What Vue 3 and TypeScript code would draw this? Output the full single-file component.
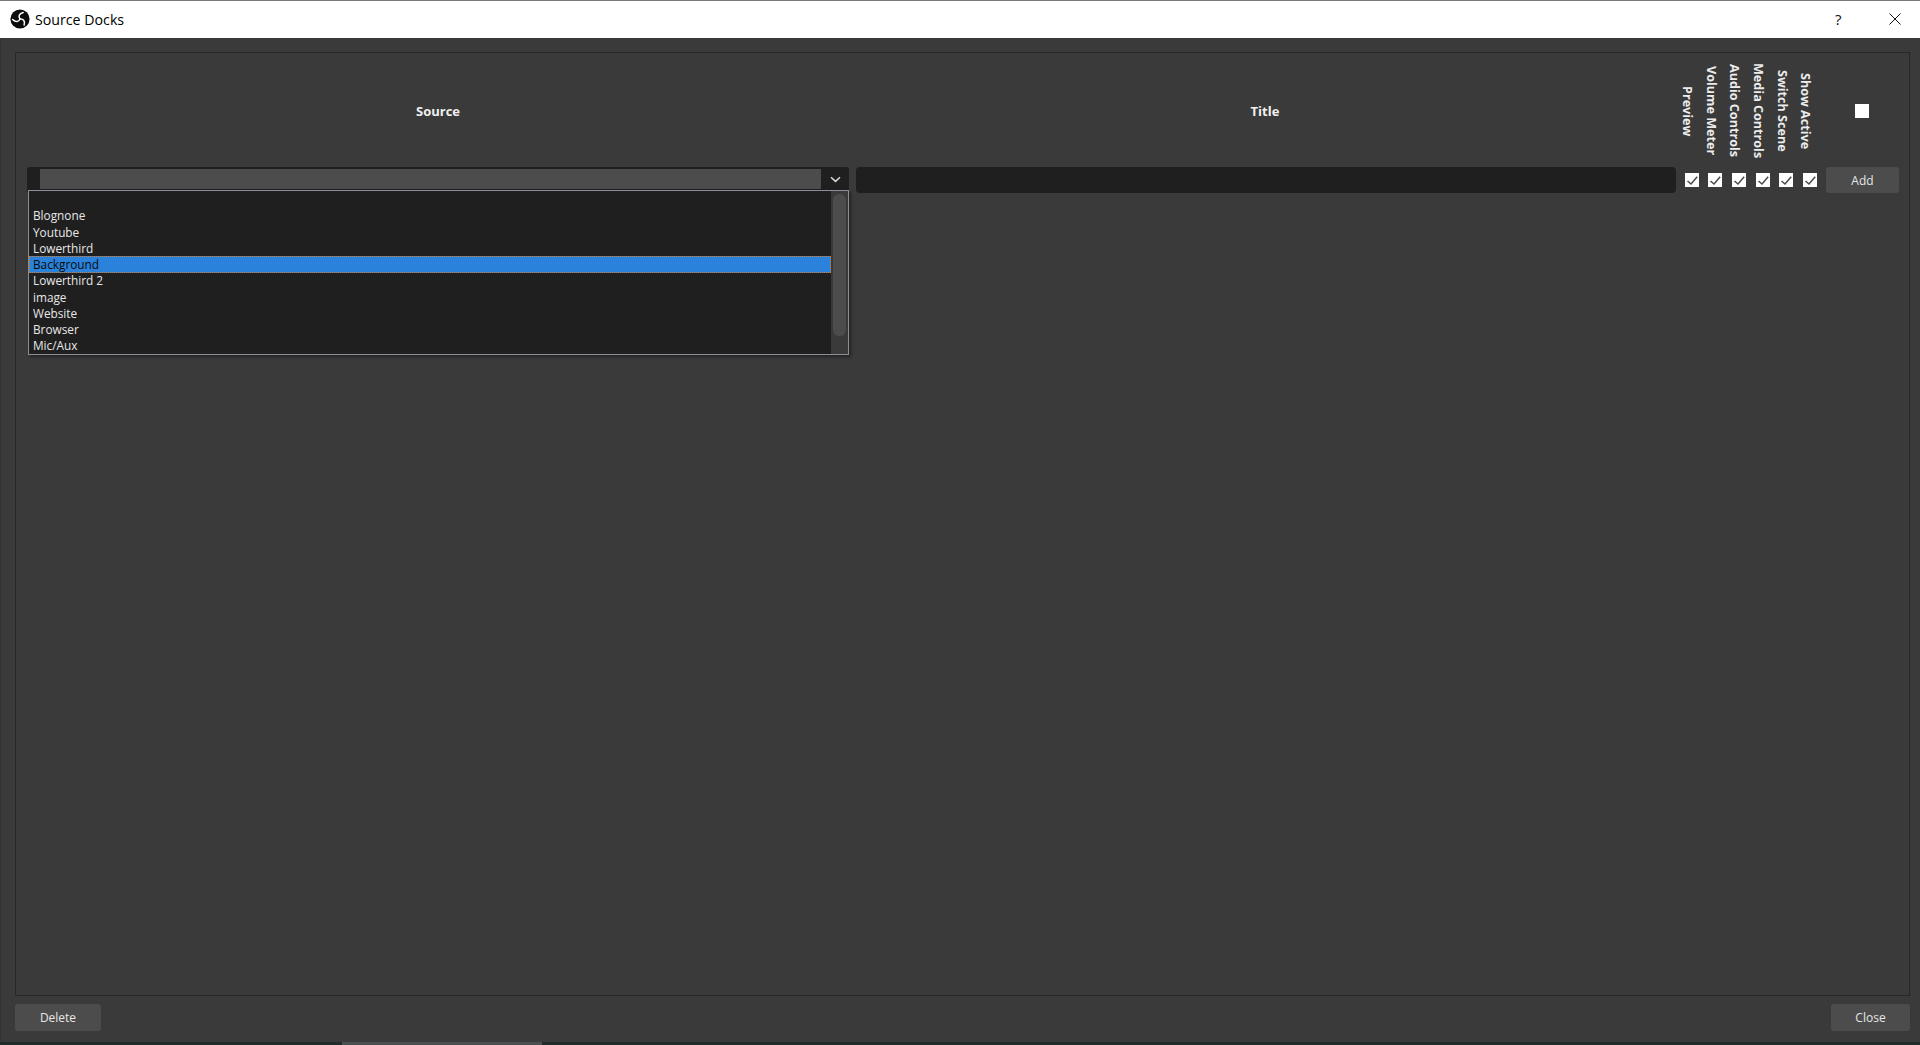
<script setup lang="ts">
const sources: string[] = ['', 'Blognone', 'Youtube', 'Lowerthird', 'Background', 'Lowerthird 2', 'image', 'Website', 'Browser', 'Mic/Aux']
const selected = 'Background'
const columns: string[] = ['Preview', 'Volume Meter', 'Audio Controls', 'Media Controls', 'Switch Scene', 'Show Active']
</script>

<template>
  <div class="window">
    <header class="titlebar">
      <svg class="logo" viewBox="0 0 20 20" aria-hidden="true">
        <circle cx="10" cy="10" r="9.6" fill="#0c0c0c" />
        <g fill="none" stroke="#fff" stroke-width="1.5" stroke-linecap="round">
          <path d="M10 10C8.2 7.6 8.8 4.4 13.2 3.4" />
          <path d="M10 10C8.2 7.6 8.8 4.4 13.2 3.4" transform="rotate(120 10 10)" />
          <path d="M10 10C8.2 7.6 8.8 4.4 13.2 3.4" transform="rotate(240 10 10)" />
        </g>
      </svg>
      <span class="title">Source Docks</span>
      <span class="help">?</span>
      <svg class="close-x" viewBox="0 0 12 12" aria-hidden="true">
        <path d="M.5.5l11 11M11.5.5l-11 11" stroke="#111" stroke-width="1" fill="none" />
      </svg>
    </header>

    <main class="content">
      <section class="panel">
        <div class="grid">
          <div class="head-cell">Source</div>
          <div class="head-cell title-head">Title</div>
          <div v-for="c in columns" :key="c" class="head-rot"><span>{{ c }}</span></div>
          <div class="head-all"><span class="check plain"></span></div>

          <div class="combo">
            <span class="combo-stub"></span>
            <span class="combo-value"></span>
            <span class="combo-arrow">
              <svg viewBox="0 0 11 7" aria-hidden="true">
                <path d="M1 1.2l4.5 4.2L10 1.2" stroke="#d8d8d8" stroke-width="1.5" fill="none" />
              </svg>
            </span>
            <div class="popup">
              <ul class="list">
                <li v-for="s in sources" :key="s" :class="{ sel: s === selected }">{{ s }}</li>
              </ul>
              <div class="track"><div class="thumb"></div></div>
            </div>
          </div>
          <div class="input"></div>
          <div v-for="c in columns" :key="c + '-box'" class="check-cell">
            <span class="check">
              <svg viewBox="0 0 14 14" aria-hidden="true">
                <path d="M2.5 8L6 11l6.2-7.2" stroke="#4a4a4a" stroke-width="1.5" fill="none" />
              </svg>
            </span>
          </div>
          <button class="btn add">Add</button>
        </div>
      </section>
      <footer class="footer">
        <button class="btn delete">Delete</button>
        <button class="btn close">Close</button>
      </footer>
    </main>
    <div class="strip"><div class="strip-thumb"></div></div>
  </div>
</template>

<style>
html, body { margin: 0; background: #3a3a3a; overflow: hidden; }
</style>

<style scoped>
.window {
  width: 1920px;
  height: 1045px;
  display: flex;
  flex-direction: column;
  font-family: "Open Sans", "Noto Sans", sans-serif;
  background: #3a3a3a;
  color: #fff;
  overflow: hidden;
}
.titlebar {
  height: 37px;
  flex: none;
  border-top: 1px solid #7a7a7a;
  background: #fff;
  color: #000;
  display: flex;
  align-items: center;
  padding: 0 0 1px 10px;
  box-sizing: border-box;
  height: 38px;
}
.logo { width: 20px; height: 20px; margin-right: 5px; }
.title { font-size: 14.2px; flex: 1; }
.help { font-size: 15px; color: #111; width: 12px; margin-right: 42px; }
.close-x { width: 12px; height: 12px; margin-right: 19px; }

.content {
  flex: 1;
  min-height: 0;
  display: flex;
  flex-direction: column;
  padding: 14px 10px 0 14px;
  border-left: 1px solid #333;
}
.panel {
  height: 944px;
  flex: none;
  box-sizing: border-box;
  border: 1px solid #272727;
  padding: 0 10px 0 11px;
}
.grid {
  display: grid;
  grid-template-columns: 822px 827px repeat(6, 23.6px) 1fr;
  grid-template-rows: 114px 26px;
  align-items: center;
}
.head-cell {
  font-size: 13px;
  font-weight: 700;
  text-align: center;
  color: #f0f0f0;
  padding-top: 2px;
}
.title-head { padding-left: 5px; }
.head-rot {
  display: flex;
  justify-content: center;
  align-items: center;
  height: 114px;
  box-sizing: border-box;
  padding-top: 2px;
}
.head-rot span {
  writing-mode: vertical-rl;
  font-size: 12.6px;
  font-weight: 700;
  white-space: nowrap;
  color: #ececec;
}
.head-all {
  display: flex;
  justify-content: center;
  margin-left: 7px;
  padding-top: 2px;
}
.check {
  width: 14px;
  height: 14px;
  display: block;
  background: #fff;
}
.check svg { display: block; width: 14px; height: 14px; }
.check-cell { display: flex; justify-content: center; padding-left: 8px; }
.combo {
  position: relative;
  height: 26px;
  background: #1f1f1f;
  border-radius: 3px;
  box-sizing: border-box;
  padding: 2px 0 0;
  display: flex;
  align-items: flex-start;
  align-self: start;
}
.combo-stub { width: 13px; height: 20px; flex: none; }
.combo-value { flex: 1; height: 20px; background: #4c4c4c; }
.combo-arrow {
  width: 28px;
  height: 20px;
  flex: none;
  display: flex;
  align-items: center;
  justify-content: center;
}
.combo-arrow svg { width: 11px; height: 7px; display: block; }
.popup {
  position: absolute;
  left: 1px;
  top: 23px;
  width: 821px;
  height: 165px;
  box-sizing: border-box;
  border: 1px solid #8b9098;
  background: #1f1f1f;
  display: flex;
  box-shadow: 2px 2px 3px rgba(0, 0, 0, 0.4);
  z-index: 2;
}
.list {
  flex: 1;
  margin: 0;
  padding: 0;
  list-style: none;
  font-size: 11.8px;
  color: #e8e8e8;
  overflow: hidden;
}
.list li {
  height: 16.25px;
  line-height: 16.25px;
  padding: 0 0 0 4px;
  box-sizing: border-box;
  white-space: nowrap;
}
.list li.sel {
  background: #2a82da;
  color: #0a0a0a;
  outline: 1px dotted #e0791a;
  outline-offset: -1px;
  height: 17px;
  margin-bottom: -0.75px;
}
.track {
  width: 17px;
  flex: none;
  background: #3a3a3a;
  padding: 3px 2px 0;
  box-sizing: border-box;
}
.thumb { height: 142px; background: #4c4c4c; border-radius: 6px; }
.input {
  margin-left: 7px;
  height: 26px;
  background: #1f1f1f;
  border-radius: 4px;
  align-self: start;
}
.btn {
  font-family: inherit;
  font-size: 12px;
  color: #e6e6e6;
  background: #4c4c4c;
  border: 0;
  border-radius: 3px;
  padding: 0;
}
.add { width: 73px; height: 26px; margin-left: 8.4px; }
.footer {
  display: flex;
  justify-content: space-between;
  margin-top: 8px;
}
.delete { width: 86px; height: 27px; padding-bottom: 1px; }
.close { width: 79px; height: 27px; padding-bottom: 1px; }
.strip {
  height: 3px;
  flex: none;
  margin-top: auto;
  background: #222a2a;
  padding-left: 342px;
}
.strip-thumb { width: 200px; height: 3px; background: #4a5050; }
</style>
